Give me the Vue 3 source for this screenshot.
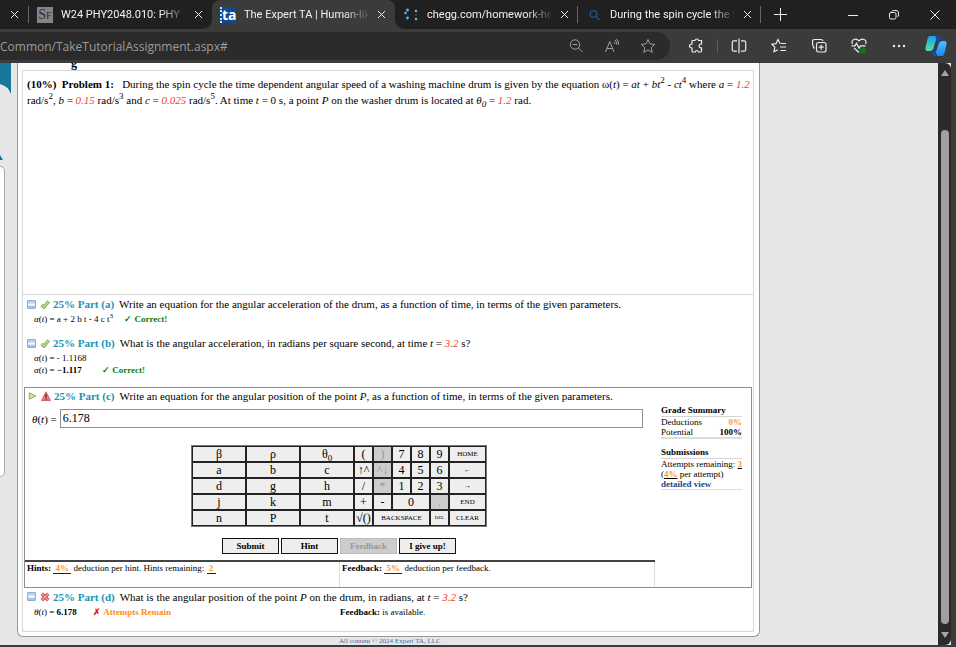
<script setup>
import { ref } from 'vue'

const answer = ref('6.178')
const tabs = [
  { title: 'W24 PHY2048.010: PHY 1', icon: 'sf', divider: false },
  { title: 'The Expert TA | Human-lik', icon: 'ta', active: true },
  { title: 'chegg.com/homework-he', icon: 'dots', divider: false },
  { title: 'During the spin cycle the t', icon: 'search', divider: true },
]
const symbols = ['β', 'ρ', 'θ0', 'a', 'b', 'c', 'd', 'g', 'h', 'j', 'k', 'm', 'n', 'P', 't']
const keys = [
  { t: '(' }, { t: ')', off: true }, { t: '7' }, { t: '8' }, { t: '9' }, { t: 'HOME', small: true },
  { t: '↑^' }, { t: '^↓', off: true }, { t: '4' }, { t: '5' }, { t: '6' }, { t: '←', small: true },
  { t: '/' }, { t: '*', off: true }, { t: '1' }, { t: '2' }, { t: '3' }, { t: '→', small: true },
  { t: '+' }, { t: '-' }, { t: '0', wide: 2 }, { t: '.', off: true }, { t: 'END', small: true },
  { t: '√()' }, { t: 'BACKSPACE', small: true, wide: 3 }, { t: 'DEL', tiny: true }, { t: 'CLEAR', small: true },
]
</script>

<template>
  <div class="window">
    <header class="tabs">
      <button class="close first" aria-label="Close tab">
        <svg width="9" height="9" viewBox="0 0 9 9"><path d="M1 1l7 7M8 1l-7 7" /></svg>
      </button>
      <div v-for="tab in tabs" :key="tab.title" class="tab" :class="{ active: tab.active, ruled: tab.icon === 'sf' || tab.divider }">
        <span v-if="tab.icon === 'sf'" class="fav sf">S<small>F</small></span>
        <span v-else-if="tab.icon === 'ta'" class="fav ta">ta</span>
        <svg v-else-if="tab.icon === 'dots'" class="fav" viewBox="0 0 16 16">
          <g fill="#5bb4ee"><circle cx="4.500" cy="3" r="1.500" /><circle cx="2.500" cy="6" r="1.300" /><circle cx="4.500" cy="11" r="1.400" /><circle cx="13" cy="4" r="1.300" /><circle cx="13" cy="8" r=".6" /><circle cx="13" cy="12" r="1.300" /></g>
        </svg>
        <svg v-else class="fav" viewBox="0 0 16 16" fill="none" stroke="#1d4f80" stroke-width="1.500"><circle cx="7.500" cy="7" r="3.300" /><path d="M10 9.500l3.500 3.500" /></svg>
        <span class="title">{{ tab.title }}</span>
        <button class="close" aria-label="Close tab">
          <svg width="9" height="9" viewBox="0 0 9 9"><path d="M1 1l7 7M8 1l-7 7" /></svg>
        </button>
      </div>
      <button class="plus" aria-label="New tab"><svg width="13" height="13" viewBox="0 0 13 13"><path d="M6.500 0v13M0 6.500h13" /></svg></button>
      <div class="winbtns">
        <button aria-label="Minimize"><svg width="10" height="10" viewBox="0 0 10 10"><path d="M0 5.500h10" /></svg></button>
        <button aria-label="Restore"><svg width="10" height="10" viewBox="0 0 10 10"><rect x=".5" y="2.500" width="6.500" height="6.500" rx="1.500" /><path d="M2.500 1.500Q3 .5 4.500 .5h2.500q2.500 0 2.500 2.500v2q0 1.500-1 2" /></svg></button>
        <button aria-label="Close"><svg width="10" height="10" viewBox="0 0 10 10"><path d="M.5 .5l9 9M9.500 .5l-9 9" /></svg></button>
      </div>
    </header>

    <div class="toolbar">
      <div class="address">
        <span class="url">Common/TakeTutorialAssignment.aspx#</span>
        <button aria-label="Zoom out"><svg viewBox="0 0 16 16"><circle cx="7" cy="6.500" r="4.700" /><path d="M4.700 6.500h4.600M10.500 10l4 4" /></svg></button>
        <button aria-label="Read aloud"><svg viewBox="0 0 16 16"><path d="M1.500 14L5.800 3.500 10 14M3 10.500h5.600M10 3.500q1.200 1 .8 2.500M11 2q2.300 1.600 1.700 4.500M12.300 .8q3 2.200 2.200 6" /></svg></button>
        <button aria-label="Favorite"><svg viewBox="0 0 16 16"><path d="M8 1.500l2 4.400 4.800.5-3.600 3.200 1 4.700L8 12l-4.200 2.300 1-4.700L1.200 6.400 6 5.900z" /></svg></button>
      </div>
      <div class="tools">
        <button aria-label="Extensions"><svg viewBox="0 0 16 16" class="bold"><path d="M5 2.500h2q.3-1.500 1.800-1.500t1.700 1.500h3v3.500h-.700q-1.700.2-1.700 1.900t1.700 1.900h.7v3.200q0 1-1 1h-2.200q-.3-1.500-1.500-1.500T7.300 14H5q-1 0-1-1v-3Q1.500 9.800 1.500 8T4 6V3.500q0-1 1-1z" /></svg></button>
        <span class="bar"></span>
        <button aria-label="Split screen"><svg viewBox="0 0 16 16" class="bold"><path d="M8 .8v14.400M6 2.800H2.800Q1.300 2.800 1.300 4.300v7.400q0 1.500 1.500 1.500H6M10 2.800h3.200q1.500 0 1.500 1.500v7.400q0 1.500-1.500 1.500H10" /></svg></button>
        <button aria-label="Favorites"><svg viewBox="0 0 16 16" class="bold"><path d="M9 5.500L7 1.500 5 5.600.8 6.200l3 3-.8 4.600 4-2M9.500 5.500H15M9 9h6M9.500 12.500H15" /></svg></button>
        <button aria-label="Collections"><svg viewBox="0 0 16 16" class="bold"><rect x="5.500" y="4.500" width="9.500" height="9.500" rx="2" /><path d="M10.200 6.700v5M7.700 9.200h5M3.500 10.500Q1.500 9 1.500 3.500 1.500 1.500 3.500 1.500H10q1.500 0 2 1.500" /></svg></button>
        <button aria-label="Performance"><svg viewBox="0 0 16 16" class="bold"><path d="M1.500 6Q0 2.500 3 1.500t5 1.500q2-2.500 5-1.500t1.500 4.500M.5 7.800H4l1.500-2.600L8 10l1.500-2.200h5M3 10l5 4.500" /><circle cx="11.800" cy="12.500" r="3.200" fill="#13721b" stroke="none" /></svg></button>
        <button aria-label="More"><svg viewBox="0 0 16 16"><g fill="#eee" stroke="none"><circle cx="3" cy="8" r="1.200" /><circle cx="8" cy="8" r="1.200" /><circle cx="13" cy="8" r="1.200" /></g></svg></button>
        <button class="copilot" aria-label="Copilot">
          <svg viewBox="0 0 22 20">
            <defs>
              <linearGradient id="cpA" x1="0" y1="0" x2="0" y2="1"><stop offset="0" stop-color="#1aa0e8" /><stop offset="1" stop-color="#5be0a0" /></linearGradient>
              <linearGradient id="cpB" x1="0" y1="0" x2="0" y2="1"><stop offset="0" stop-color="#4fc0ff" /><stop offset="1" stop-color="#1689f5" /></linearGradient>
            </defs>
            <path d="M5 0h7q3 0 3.500 4H11L8.500 12Q7.500 15 4.500 15H2.500Q0 15 .5 11.500L2.500 3Q3 0 5 0z" fill="url(#cpA)" stroke="none" />
            <path d="M17 20h-6q-3 0-3.500-4h3.500l2.500-8Q14.500 5 17.500 5h2Q22 5 21.500 8.500L19.500 17Q19 20 17 20z" fill="url(#cpB)" stroke="none" />
            <path d="M10.500 0H13q2.500.5 3 5-2 .5-2.500 2.500L11 4z" fill="#1747a8" stroke="none" />
            <path d="M7 15q2-.5 2.500-3l1.500 4.500q.3 2 2 3.500h-2q-3-.5-4-5z" fill="#1747a8" stroke="none" />
          </svg>
        </button>
      </div>
    </div>

    <main class="page">
      <aside class="side">
        <svg class="wave" viewBox="0 0 11 31"><path d="M0 0h11v31Q8 23 0 21z" fill="#15789b" /></svg>
        <svg class="tip" viewBox="0 0 3 6"><path d="M0 1l3 5H0z" fill="#15789b" /></svg>
        <div class="sidebox"></div>
      </aside>

      <section class="content">
        <div class="card">
          <div class="cut"><b>g</b></div>
          <div class="inner">
            <p class="problem">
              <b>(10%)&nbsp; Problem 1:</b>&nbsp;&nbsp; During the spin cycle the time dependent angular speed of a washing machine drum is given by the equation ω(<i>t</i>) = <i>at</i> + <i>bt</i><sup>2</sup> - <i>ct</i><sup>4</sup> where <i>a</i> = <i class="red">1.2</i><br>
              rad/s<sup>2</sup>, <i>b</i> = <i class="red">0.15</i> rad/s<sup>3</sup> and <i>c</i> = <i class="red">0.025</i> rad/s<sup>5</sup>. At time <i>t</i> = 0 s, a point <i>P</i> on the washer drum is located at <i>θ<sub>0</sub></i> = <i class="red">1.2</i> rad.
            </p>

            <div class="part">
              <h2 class="head">
                <span class="mini"></span>
                <svg class="ico" viewBox="0 0 10 10"><path d="M1.500 6L4 8.200 8.800 2.200" fill="none" stroke="#7ba653" stroke-width="3.200" /><path d="M1.500 6L4 8.200 8.800 2.200" fill="none" stroke="#b9dd95" stroke-width="1.600" /></svg>
                <b>25% Part (a)</b><span>Write an equation for the angular acceleration of the drum, as a function of time, in terms of the given parameters.</span>
              </h2>
              <p class="line"><i>α</i>(<i>t</i>) = a + 2 b t - 4 c t<sup>3</sup> <span class="ok">✓ Correct!</span></p>
            </div>
            <div class="part second">
              <h2 class="head">
                <span class="mini"></span>
                <svg class="ico" viewBox="0 0 10 10"><path d="M1.500 6L4 8.200 8.800 2.200" fill="none" stroke="#7ba653" stroke-width="3.200" /><path d="M1.500 6L4 8.200 8.800 2.200" fill="none" stroke="#b9dd95" stroke-width="1.600" /></svg>
                <b>25% Part (b)</b><span>What is the angular acceleration, in radians per square second, at time <i>t</i> = <i class="red">3.2</i> s?</span>
              </h2>
              <p class="line"><i>α</i>(<i>t</i>) = - 1.1168</p>
              <p class="line"><i>α</i>(<i>t</i>) = <b>−1.117</b> <span class="ok far">✓ Correct!</span></p>
            </div>

            <form class="current" @submit.prevent>
              <h2 class="head">
                <svg class="ico play" viewBox="0 0 10 10"><path d="M1.500 1.500L8.500 5 1.500 8.500z" fill="#cfe8a6" stroke="#7fa04a" /></svg>
                <svg class="ico" viewBox="0 0 10 10"><path d="M5 .8L9.500 9.500H.5z" fill="#e88080" stroke="#c94f4f" stroke-width=".8" /><path d="M5 3.500v3M5 7.500v1.200" stroke="#511" stroke-width="1.300" /></svg>
                <b>25% Part (c)</b><span>Write an equation for the angular position of the point <i>P</i>, as a function of time, in terms of the given parameters.</span>
              </h2>
              <div class="cols">
                <div class="work">
                  <div class="answer">
                    <label for="ans"><i>θ</i>(<i>t</i>) =</label>
                    <input id="ans" v-model="answer" type="text">
                  </div>
                  <div class="pads">
                    <div class="pad letters">
                      <button v-for="s in symbols" :key="s" type="button"><template v-if="s === 'θ0'">θ<sub>0</sub></template><template v-else>{{ s }}</template></button>
                    </div>
                    <div class="pad numbers">
                      <button v-for="k in keys" :key="k.t" type="button" :disabled="k.off" :class="{ small: k.small, tiny: k.tiny, w2: k.wide === 2, w3: k.wide === 3 }">{{ k.t }}</button>
                    </div>
                  </div>
                  <div class="actions">
                    <button type="submit">Submit</button>
                    <button type="button">Hint</button>
                    <button type="button" disabled>Feedback</button>
                    <button type="button">I give up!</button>
                  </div>
                </div>
                <div class="grades">
                  <h3>Grade Summary</h3>
                  <div class="rule">
                    <p><span>Deductions</span><b class="orange">0%</b></p>
                    <p><span>Potential</span><b>100%</b></p>
                  </div>
                  <h3>Submissions</h3>
                  <div class="rule thin">
                    <p><span>Attempts remaining:</span><u><b class="orange">3</b></u></p>
                    <p><span>(<u><b class="orange">4%</b></u> per attempt)</span></p>
                    <p><a href="#">detailed view</a></p>
                  </div>
                </div>
              </div>
              <div class="hints">
                <p><b>Hints:</b> <u class="orange">&nbsp;4%&nbsp;</u>&nbsp;deduction per hint. Hints remaining: <u class="orange">&nbsp;2&nbsp;</u></p>
                <p><b>Feedback:</b> <u class="orange">&nbsp;5%&nbsp;</u>&nbsp;deduction per feedback.</p>
              </div>
            </form>

            <div class="part last">
              <h2 class="head">
                <span class="mini"></span>
                <svg class="ico" viewBox="0 0 10 10"><path d="M1.800 1.800l6.400 6.400M8.200 1.800L1.800 8.200" stroke="#cc4a4a" stroke-width="3.400" /><path d="M1.800 1.800l6.400 6.400M8.200 1.800L1.800 8.200" stroke="#f0a0a0" stroke-width="1.400" /></svg>
                <b>25% Part (d)</b><span>What is the angular position of the point <i>P</i> on the drum, in radians, at <i>t</i> = <i class="red">3.2</i> s?</span>
              </h2>
              <div class="result">
                <p class="line"><i>θ</i>(<i>t</i>) = <b>6.178</b> <span class="bad"><span class="x">✗</span> Attempts Remain</span></p>
                <p class="line"><b>Feedback:</b> is available.</p>
              </div>
            </div>
          </div>
        </div>
        <footer>All content © 2024 Expert TA, LLC</footer>
      </section>

      <div class="scroll">
        <svg viewBox="0 0 8 6"><path d="M4 0l4 6H0z" fill="#a5a5a5" /></svg>
        <div class="thumb"></div>
        <svg viewBox="0 0 8 6"><path d="M4 6l4-6H0z" fill="#a5a5a5" /></svg>
      </div>
    </main>
  </div>
</template>

<style>
body { margin: 0; background: #3b3b3b; }
</style>

<style scoped>
* { box-sizing: border-box; }
p, h2, h3 { margin: 0; font-weight: normal; }
button { font: inherit; color: inherit; margin: 0; padding: 0; border: 0; background: none; }
.window { min-height: 100vh; display: flex; flex-direction: column; padding-bottom: 3px; overflow: hidden; background: #3b3b3b; font-family: "Open Sans", "Noto Sans", sans-serif; }

.tabs { display: flex; height: 29px; background: #202020; color: #f2f2f2; font-family: Roboto, "Open Sans", sans-serif; font-size: 11px; }
.tabs svg { fill: none; }
.tabs button svg { stroke: #eee; stroke-width: 1; display: block; }
.tabs button { display: flex; align-items: center; justify-content: center; flex: none; }
.first { width: 29px; }
.tab { width: 183px; flex: none; display: flex; align-items: center; gap: 8px; padding: 0 9px 0 8px; position: relative; }
.tab.ruled::before { content: ""; position: absolute; left: -1px; top: 6px; width: 1px; height: 17px; background: #666; }
.tab.active { background: #3b3b3b; border-radius: 8px 8px 0 0; }
.tab.active::before, .tab.active::after { content: ""; position: absolute; bottom: 0; width: 8px; height: 8px; }
.tab.active::before { left: -8px; background: radial-gradient(circle at 0 0, #202020 7px, #3b3b3b 8px); }
.tab.active::after { right: -8px; background: radial-gradient(circle at 100% 0, #202020 7px, #3b3b3b 8px); }
.tab .close { width: 10px; }
.title { flex: 1; min-width: 0; white-space: nowrap; line-height: 29px; -webkit-mask-image: linear-gradient(90deg, #000 80%, transparent 102%); mask-image: linear-gradient(90deg, #000 80%, transparent 102%); }
.fav { width: 16px; height: 16px; flex: none; }
.sf { background: #858585; color: #1e2d4a; font: 14px/15px "Liberation Serif", serif; text-align: center; }
.sf small { font-size: 10px; }
.ta { background: #0d4a8f; color: #fff; font: bold 14px/15px "Open Sans", sans-serif; text-align: right; border-left: 2px dotted #cfe2f6; }
.plus { width: 39px; position: relative; }
.plus::before { content: ""; position: absolute; left: -1px; top: 6px; width: 1px; height: 17px; background: #666; }
.winbtns { margin-left: auto; display: flex; padding-right: 1px; }
.winbtns button { width: 41px; }

.toolbar { height: 34px; display: flex; align-items: center; }
.address { flex: 1; height: 28px; background: #2b2b2b; border-radius: 0 14px 14px 0; display: flex; align-items: center; gap: 20px; padding-right: 14px; }
.url { flex: 1; font-size: 12px; color: #9b9b9b; white-space: nowrap; }
.toolbar svg { display: block; width: 16px; height: 16px; fill: none; stroke: #a0a0a0; stroke-width: 1; }
.toolbar svg.bold { stroke: #ececec; stroke-width: 1.2; }
.tools { width: 286px; display: flex; align-items: center; gap: 24px; padding-left: 18px; }
.bar { width: 1px; height: 14px; background: #5c5c5c; margin: 0 -11px; }
.toolbar .copilot { margin-left: -6px; }
.toolbar .copilot svg { width: 22px; height: 20px; }

.page { flex: 1; display: flex; background: #e5e6e8; font-family: "Liberation Serif", "Times New Roman", serif; color: #000; font-size: 11px; border-right: 5px solid #3b3b3b; }
.side { width: 17px; flex: none; display: flex; flex-direction: column; align-items: flex-start; }
.wave { width: 11px; height: 31px; }
.tip { width: 3px; height: 6px; margin-top: 60px; }
.sidebox { width: 5px; height: 311px; margin-top: 6px; background: #fff; border: 1px solid #aaa; border-left: 0; border-radius: 0 5px 5px 0; }
.content { flex: 1; display: flex; flex-direction: column; align-items: flex-start; min-width: 0; }
.card { width: 80%; min-width: 743px; background: #fdfdfd; border: 1px solid #999; border-top: 0; border-radius: 0 0 6px 6px; padding: 0 5px 4px 4px; }
.cut { height: 7px; overflow: hidden; display: flex; align-items: flex-end; padding-left: 49px; line-height: 13px; font-size: 12px; }
.inner { border: 1px solid #d8d8d8; background: #fff; padding-bottom: 13px; }
.problem { height: 224px; padding: 5px 0 0 4px; border-bottom: 1px solid #d8d8d8; line-height: 16px; white-space: nowrap; }
sup, sub { font-size: 9px; line-height: 0; }
.red { color: #f43c2c; }
.part { padding-left: 4px; }
.second { padding-top: 9px; }
.head { display: flex; align-items: center; height: 18px; font-size: 11px; white-space: nowrap; }
.head b { color: #2191b7; margin-right: 5px; }
.mini { width: 9px; height: 9px; border: 1px solid #8fabd2; border-radius: 1px; margin-right: 4px; background: linear-gradient(#bcd3ec 0 30%, #f4f9ff 45% 60%, #a4c3e6 75%); }
.ico { width: 10px; height: 10px; margin-right: 3px; flex: none; }
.play { width: 9px; margin-right: 4px; }
.line { font-size: 9px; line-height: 12px; padding-left: 7px; white-space: nowrap; }
.line sup { font-size: 7px; }
.ok { color: #078007; font-weight: bold; margin-left: 9px; }
.far { margin-left: 18px; }
.bad { color: #ff8c1a; font-weight: bold; margin-left: 14px; }
.x { color: #e11; }

.current { border: 1px solid #8d8d8d; margin: 11px 1px 0; }
.current .head { padding-left: 3px; height: 16px; }
.last .head { height: 17px; }
.cols { display: flex; }
.work { flex: 1; }
.answer { display: flex; align-items: center; gap: 3px; padding: 5px 0 0 7px; }
.answer input { flex: 1; height: 19px; border: 1px solid #8f8f8f; padding: 0 2px; font: 12px "Liberation Serif", serif; border-radius: 0; outline: 0; min-width: 0; }
.pads { display: flex; padding: 17px 0 0 166px; }
.pad { display: grid; grid-auto-rows: 14px; gap: 2px; padding: 1px; background: #222; border: 1px solid #777; }
.letters { grid-template-columns: repeat(3, 52px); border-right-width: 0; }
.numbers { grid-template-columns: 17px 17px 17px 17px 17px 35px; border-left-width: 0; }
.pad button { background: #eee; font-size: 12px; line-height: 14px; text-align: center; white-space: nowrap; }
.pad button:disabled { background: #ccc; color: #999; }
.pad .small { font-size: 7px; }
.pad .tiny { font-size: 5px; }
.pad .w2 { grid-column: span 2; }
.pad .w3 { grid-column: span 3; }
.actions { display: flex; gap: 2px; padding: 11px 0 6px 197px; }
.actions button { width: 57px; height: 16px; background: #eee; border: 1px solid #111; font-size: 9px; font-weight: bold; line-height: 13px; }
.actions button:disabled { background: #ccc; border-color: #bbb; color: #999; }
.grades { width: 90px; padding-right: 9px; margin-left: 18px; font-size: 9px; line-height: 10px; white-space: nowrap; }
.grades h3 { font-size: 9px; line-height: 12px; font-weight: bold; border-bottom: 1px solid #d5d5d5; }
.grades .rule { border-bottom: 2px solid #ddd; margin-bottom: 7px; }
.grades .thin { border-bottom-width: 1px; margin-bottom: 0; }
.grades p { display: flex; justify-content: space-between; }
.grades a { color: #16498a; font-weight: bold; text-decoration: none; }
.grades u { color: #000; }
.orange { color: #ff951c; font-weight: bold; }
.hints { display: flex; width: 630px; border-top: 2px solid #444; font-size: 9px; line-height: 12px; height: 27px; white-space: nowrap; }
.hints p { width: 315px; padding-left: 2px; border-right: 1px solid #ddd; }
.hints u { text-decoration: none; border-bottom: 1px solid #222; }
.result { display: flex; padding-top: 1px; }
.result .line:first-child { width: 306px; }
footer { font-size: 7px; line-height: 9px; height: 8px; color: #4a6ba6; padding-left: 322px; }

.scroll { width: 13px; flex: none; background: #2b2b2b; display: flex; flex-direction: column; align-items: center; padding: 7px 0; border-radius: 0 6px 6px 0; }
.scroll svg { width: 8px; height: 6px; flex: none; }
.thumb { flex: 1; width: 8px; margin: 54px 0 8px; background: #a0a0a0; border-radius: 4px; }
</style>
